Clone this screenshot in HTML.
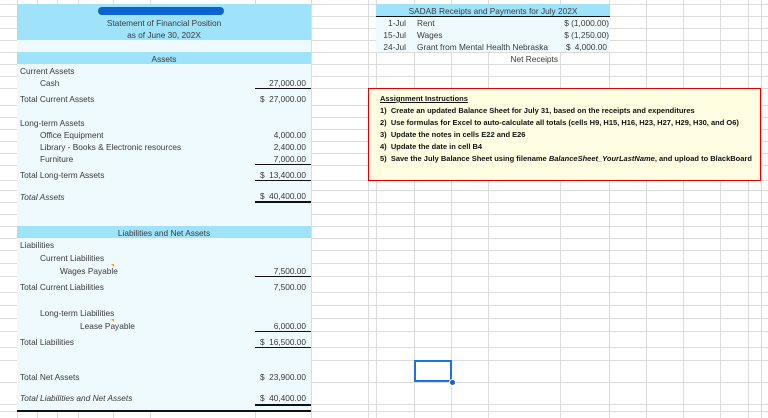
<!DOCTYPE html>
<html><head><meta charset="utf-8"><style>
*{margin:0;padding:0;box-sizing:border-box}
body{width:768px;height:418px;overflow:hidden;background:#fff;position:relative;font-family:"Liberation Sans",sans-serif;font-size:8.3px;color:#3a3a3a}
.a{position:absolute}
.t{position:absolute;line-height:12px;height:12px;white-space:nowrap}
.r{text-align:right}
.c{text-align:center}
.i{font-style:italic}
.hl{position:absolute;height:1px;background:#111}
.b{font-weight:bold;color:#111;font-size:7.5px}
</style></head><body>
<svg class="a" style="left:0;top:0" width="768" height="418">
<g stroke="#dcdcdc" stroke-width="1">
<line x1="0" y1="4.5" x2="768" y2="4.5"/><line x1="0" y1="16.5" x2="768" y2="16.5"/><line x1="0" y1="28.5" x2="768" y2="28.5"/><line x1="0" y1="40.5" x2="768" y2="40.5"/><line x1="0" y1="52.5" x2="768" y2="52.5"/><line x1="0" y1="64.5" x2="768" y2="64.5"/><line x1="0" y1="76.5" x2="768" y2="76.5"/><line x1="0" y1="88.5" x2="768" y2="88.5"/><line x1="0" y1="105.5" x2="768" y2="105.5"/><line x1="0" y1="117.5" x2="768" y2="117.5"/><line x1="0" y1="129.5" x2="768" y2="129.5"/><line x1="0" y1="141.5" x2="768" y2="141.5"/><line x1="0" y1="153.5" x2="768" y2="153.5"/><line x1="0" y1="165.5" x2="768" y2="165.5"/><line x1="0" y1="180.5" x2="768" y2="180.5"/><line x1="0" y1="190.5" x2="768" y2="190.5"/><line x1="0" y1="202.5" x2="768" y2="202.5"/><line x1="0" y1="214.5" x2="768" y2="214.5"/><line x1="0" y1="226.5" x2="768" y2="226.5"/><line x1="0" y1="238.5" x2="768" y2="238.5"/><line x1="0" y1="250.5" x2="768" y2="250.5"/><line x1="0" y1="263.5" x2="768" y2="263.5"/><line x1="0" y1="276.5" x2="768" y2="276.5"/><line x1="0" y1="292.5" x2="768" y2="292.5"/><line x1="0" y1="305.5" x2="768" y2="305.5"/><line x1="0" y1="318.5" x2="768" y2="318.5"/><line x1="0" y1="331.5" x2="768" y2="331.5"/><line x1="0" y1="347.5" x2="768" y2="347.5"/><line x1="0" y1="360.5" x2="768" y2="360.5"/><line x1="0" y1="382.5" x2="768" y2="382.5"/><line x1="0" y1="404.5" x2="768" y2="404.5"/><line x1="0" y1="411.5" x2="768" y2="411.5"/>
<line x1="17.5" y1="0" x2="17.5" y2="418"/><line x1="37.5" y1="0" x2="37.5" y2="418"/><line x1="57.5" y1="0" x2="57.5" y2="418"/><line x1="78.5" y1="0" x2="78.5" y2="418"/><line x1="113.5" y1="0" x2="113.5" y2="418"/><line x1="150.5" y1="0" x2="150.5" y2="418"/><line x1="255.5" y1="0" x2="255.5" y2="418"/><line x1="311.5" y1="0" x2="311.5" y2="418"/><line x1="368.5" y1="0" x2="368.5" y2="418"/><line x1="376.5" y1="0" x2="376.5" y2="418"/><line x1="414.5" y1="0" x2="414.5" y2="418"/><line x1="451.5" y1="0" x2="451.5" y2="418"/><line x1="488.5" y1="0" x2="488.5" y2="418"/><line x1="560.5" y1="0" x2="560.5" y2="418"/><line x1="609.5" y1="0" x2="609.5" y2="418"/><line x1="646.5" y1="0" x2="646.5" y2="418"/><line x1="683.5" y1="0" x2="683.5" y2="418"/><line x1="720.5" y1="0" x2="720.5" y2="418"/><line x1="748.5" y1="0" x2="748.5" y2="418"/><line x1="761.5" y1="0" x2="761.5" y2="418"/>
</g></svg>

<div class="a" style="left:17px;top:4px;width:294px;height:407px;background:#eefafe"></div>
<div class="a" style="left:17px;top:4px;width:294px;height:36px;background:#9fe3fb"></div>
<div class="a" style="left:17px;top:52px;width:294px;height:12px;background:#9fe3fb"></div>
<div class="a" style="left:17px;top:226px;width:294px;height:12px;background:#9fe3fb"></div>
<div class="a" style="left:98px;top:7px;width:126px;height:8px;background:#0b63d0;border-radius:4px"></div>
<div class="hl" style="left:17px;top:410px;width:294px;height:2px"></div>

<div class="t c" style="left:17px;top:17px;width:294px">Statement of Financial Position</div>
<div class="t c" style="left:17px;top:29px;width:294px">as of June 30, 202X</div>
<div class="t c" style="left:17px;top:53px;width:294px">Assets</div>
<div class="t" style="left:20px;top:65px">Current Assets</div>
<div class="t" style="left:40px;top:77px">Cash</div>
<div class="t r" style="left:245px;top:77px;width:61px">27,000.00</div>
<div class="hl" style="left:255px;top:88px;width:56px"></div>
<div class="t" style="left:20px;top:93px">Total Current Assets</div>
<div class="t" style="left:260px;top:93px">$</div><div class="t r" style="left:245px;top:93px;width:61px">27,000.00</div>
<div class="t" style="left:20px;top:117px">Long-term Assets</div>
<div class="t" style="left:40px;top:129px">Office Equipment</div>
<div class="t r" style="left:245px;top:129px;width:61px">4,000.00</div>
<div class="t" style="left:40px;top:141px">Library - Books &amp; Electronic resources</div>
<div class="t r" style="left:245px;top:141px;width:61px">2,400.00</div>
<div class="t" style="left:40px;top:153px">Furniture</div>
<div class="t r" style="left:245px;top:153px;width:61px">7,000.00</div>
<div class="hl" style="left:255px;top:164px;width:56px"></div>
<div class="t" style="left:20px;top:169px">Total Long-term Assets</div>
<div class="t" style="left:260px;top:169px">$</div><div class="t r" style="left:245px;top:169px;width:61px">13,400.00</div>
<div class="hl" style="left:255px;top:180px;width:56px"></div>
<div class="t i" style="left:20px;top:191px">Total Assets</div>
<div class="t" style="left:260px;top:190px">$</div><div class="t r" style="left:245px;top:190px;width:61px">40,400.00</div>
<div class="hl" style="left:255px;top:201px;width:56px;height:2px"></div>

<div class="t c" style="left:17px;top:227px;width:294px">Liabilities and Net Assets</div>
<div class="t" style="left:20px;top:239px">Liabilities</div>
<div class="t" style="left:40px;top:252px">Current Liabilities</div>
<div class="t" style="left:60px;top:265px">Wages Payable</div>
<div class="a" style="left:111px;top:264px;width:0;height:0;border-left:3px solid transparent;border-top:3px solid #f0a000"></div>
<div class="t r" style="left:245px;top:265px;width:61px">7,500.00</div>
<div class="hl" style="left:255px;top:276px;width:56px"></div>
<div class="t" style="left:20px;top:281px">Total Current Liabilities</div>
<div class="t r" style="left:245px;top:281px;width:61px">7,500.00</div>
<div class="t" style="left:40px;top:307px">Long-term Liabilities</div>
<div class="t" style="left:80px;top:320px">Lease Payable</div>
<div class="a" style="left:111px;top:319px;width:0;height:0;border-left:3px solid transparent;border-top:3px solid #f0a000"></div>
<div class="t r" style="left:245px;top:320px;width:61px">6,000.00</div>
<div class="hl" style="left:255px;top:331px;width:56px"></div>
<div class="t" style="left:20px;top:336px">Total Liabilities</div>
<div class="t" style="left:260px;top:336px">$</div><div class="t r" style="left:245px;top:336px;width:61px">16,500.00</div>
<div class="hl" style="left:255px;top:347px;width:56px"></div>
<div class="t" style="left:20px;top:371px">Total Net Assets</div>
<div class="t" style="left:260px;top:371px">$</div><div class="t r" style="left:245px;top:371px;width:61px">23,900.00</div>
<div class="t i" style="left:20px;top:392px">Total Liabilities and Net Assets</div>
<div class="t" style="left:260px;top:392px">$</div><div class="t r" style="left:245px;top:392px;width:61px">40,400.00</div>
<div class="hl" style="left:255px;top:404px;width:56px;height:2px"></div>

<div class="a" style="left:376px;top:4px;width:234px;height:12px;background:#9fe3fb"></div>
<div class="a" style="left:376px;top:16px;width:234px;height:36px;background:#eefafe"></div>
<div class="hl" style="left:376px;top:16px;width:234px"></div>
<div class="t c" style="left:376px;top:5px;width:234px">SADAB Receipts and Payments for July 202X</div>
<div class="t r" style="left:376px;top:17px;width:30px">1-Jul</div><div class="t" style="left:417px;top:17px">Rent</div><div class="t r" style="left:550px;top:17px;width:59px">$ (1,000.00)</div>
<div class="t r" style="left:376px;top:29px;width:30px">15-Jul</div><div class="t" style="left:417px;top:29px">Wages</div><div class="t r" style="left:550px;top:29px;width:59px">$ (1,250.00)</div>
<div class="t r" style="left:376px;top:41px;width:30px">24-Jul</div><div class="t" style="left:417px;top:41px">Grant from Mental Health Nebraska</div><div class="t" style="left:566px;top:41px">$</div><div class="t r" style="left:550px;top:41px;width:57px">4,000.00</div>
<div class="t r" style="left:478px;top:53px;width:80px">Net Receipts</div>

<div class="a" style="left:368px;top:88px;width:393px;height:93px;background:#fffee3;border:1px solid #e00000"></div>
<div class="t b" style="left:380px;top:93px;text-decoration:underline">Assignment Instructions</div>
<div class="t b" style="left:380px;top:105px">1)&nbsp; Create an updated Balance Sheet for July 31, based on the receipts and expenditures</div>
<div class="t b" style="left:380px;top:117px">2)&nbsp; Use formulas for Excel to auto-calculate all totals (cells H9, H15, H16, H23, H27, H29, H30, and O6)</div>
<div class="t b" style="left:380px;top:129px">3)&nbsp; Update the notes in cells E22 and E26</div>
<div class="t b" style="left:380px;top:141px">4)&nbsp; Update the date in cell B4</div>
<div class="t b" style="left:380px;top:153px">5)&nbsp; Save the July Balance Sheet using filename <i>BalanceSheet_YourLastName</i>, and upload to BlackBoard</div>

<div class="a" style="left:414px;top:360px;width:38px;height:22px;border:2px solid #1a73e8"></div>
<div class="a" style="left:449px;top:379px;width:7px;height:7px;border-radius:50%;background:#1a5fd0;border:1px solid #fff"></div>
</body></html>
